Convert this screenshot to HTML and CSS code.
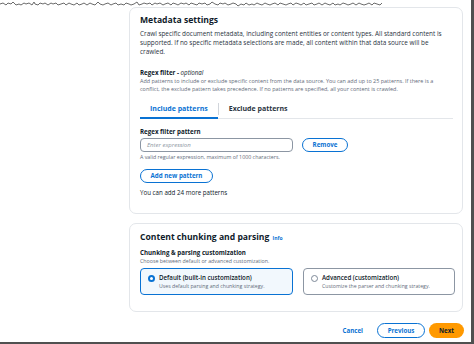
FILE: index.html
```html
<!DOCTYPE html>
<html lang="en">
<head>
<meta charset="utf-8">
<title>Metadata settings</title>
<link rel="stylesheet" href="styles.css">
</head>
<body>
<div class="frame">
  <svg class="torn" width="471" height="8" viewBox="0 0 471 8" aria-hidden="true">
    <path d="M0 4 l3 -1 l3 2 l2 -2 l3 1 l2 -2 l3 3 l3 -1 l2 1 l3 -2 l2 1 l3 -1 l3 2 l2 -3 l1 2 l3 1 l2 -2 l3 1 l2 -1 l3 2 l3 -2 l2 1 l3 -1 l2 2 l3 -1 l3 -1 l2 2 l3 -2 l2 1 l3 1 l3 -2 l2 2 l3 -1 l2 -1 l3 2 l3 -2 l2 1 l3 1 l3 -3 l2 2 l3 1 l2 -1 l3 -1 l3 2 l2 -1 l3 -1 l2 2 l3 -1 l3 1 l2 -2 l3 1 l2 1 l3 -1 l3 -2 l2 3 l3 -1 l2 -1 l3 1 l3 -1 l2 2 l3 -2 l2 1 l3 -1 l3 2 l2 -1 l3 -1 l3 2 l2 -2 l3 1 l2 1 l3 -2 l3 1 l2 -1 l3 2 l2 -2 l3 1 l3 1 l2 -2 l3 1 l3 -1 l2 2 l3 -1 l2 -2 l3 2 l3 1 l2 -2 l3 1 l2 -1 l3 2 l3 -1 l2 -1 l3 1 l2 2 l3 -2 l3 1 l2 -2 l3 2 l3 -1 l2 1 l3 -2 l2 1 l3 1 l3 -2 l2 1 l3 1 l2 -1 l3 -1 l3 2 l2 -2 l3 1 l3 1 l2 -1 l3 -1 l2 2 l3 -2 l3 1 l2 1 l3 -2 l2 2 l3 -1 l3 -1 l2 2 l3 -1 l2 -1 l3 2 l3 -2 l2 1 l3 1 l3 -2 l2 2 l3 -1 l2 1 l3 -2 l3 1 l2 1 l3 -1 l2 -1 l3 2 l3 -2 l2 1 l3 1 l3 -1 l2 -1 l3 2 l2 -2 l3 1 l3 1 l2 -2" fill="none" stroke="#6b6b6b" stroke-width="1"/>
  </svg>
  <main class="content">
    <section class="card">
      <h2 class="card-title">Metadata settings</h2>
      <p class="card-desc">Crawl specific document metadata, including content entities or content types. All standard content is supported. If no specific metadata selections are made, all content within that data source will be crawled.</p>

      <div class="field-label regex-label">Regex filter - <em>optional</em></div>
      <p class="field-desc">Add patterns to include or exclude specific content from the data source. You can add up to 25 patterns. If there is a conflict, the exclude pattern takes precedence. If no patterns are specified, all your content is crawled.</p>

      <div class="tabs">
        <div class="tab tab-active">Include patterns</div>
        <div class="tab-sep"></div>
        <div class="tab">Exclude patterns</div>
      </div>

      <div class="field-label pattern-label">Regex filter pattern</div>
      <div class="input-row">
        <div class="input">Enter expression</div>
        <button class="btn btn-normal">Remove</button>
      </div>
      <p class="hint">A valid regular expression, maximum of 1000 characters.</p>
      <button class="btn btn-normal btn-add">Add new pattern</button>
      <p class="remaining">You can add 24 more patterns</p>
    </section>

    <section class="card card-chunk">
      <h2 class="card-title">Content chunking and parsing <span class="info">Info</span></h2>
      <div class="field-label chunk-label">Chunking &amp; parsing customization</div>
      <p class="hint chunk-hint">Choose between default or advanced customization.</p>
      <div class="tiles">
        <div class="tile tile-selected">
          <span class="radio radio-on"></span>
          <div class="tile-text">
            <div class="tile-title">Default (built-in customization)</div>
            <div class="tile-sub">Uses default parsing and chunking strategy.</div>
          </div>
        </div>
        <div class="tile">
          <span class="radio"></span>
          <div class="tile-text">
            <div class="tile-title">Advanced (customization)</div>
            <div class="tile-sub">Customize the parser and chunking strategy.</div>
          </div>
        </div>
      </div>
    </section>

    <div class="actions">
      <button class="btn btn-link">Cancel</button>
      <button class="btn btn-normal btn-prev">Previous</button>
      <button class="btn btn-primary">Next</button>
    </div>
  </main>
</div>
</body>
</html>
```

FILE: styles.css
```css
* { box-sizing: border-box; }
html, body { margin: 0; padding: 0; background: #ffffff; }
body {
  font-family: "Open Sans", "Noto Sans", "Liberation Sans", sans-serif;
  color: #0f1b2a;
}
.frame {
  width: 474px;
  height: 344px;
  border-right: 3px solid #505050;
  border-bottom: 2px solid #505050;
  overflow: hidden;
  display: flex;
  flex-direction: column;
}
.torn { display: block; flex: none; }
.content {
  padding: 0 8px 0 129px;
  margin-top: -1px;
  display: flex;
  flex-direction: column;
}
.card {
  border: 1px solid #e3e6ea;
  border-radius: 7px;
  padding: 6px 9px 16px 10px;
  background: #fff;
}
.card-title {
  margin: 0;
  font-size: 8.6px;
  line-height: 13px;
  font-weight: 700;
  color: #0f1b2a;
}
.card-desc {
  margin: 2px 0 0;
  font-size: 6.4px;
  line-height: 9px;
  color: #2a3441;
}
.field-label {
  font-size: 6.2px;
  line-height: 8px;
  font-weight: 700;
  color: #0f1b2a;
}
.field-label em { font-weight: 400; }
.regex-label { margin-top: 13px; }
.field-desc {
  margin: 0;
  font-size: 5.45px;
  line-height: 8px;
  color: #5f6b7a;
}
.tabs {
  margin-top: 6px;
  display: flex;
  align-items: center;
  border-bottom: 1px solid #e3e6ea;
}
.tab {
  font-size: 7px;
  line-height: 9px;
  font-weight: 700;
  color: #2a3441;
  padding: 5px 10px 4px;
  border-bottom: 2px solid transparent;
  margin-bottom: -1px;
}
.tab-active {
  color: #0972d3;
  border-bottom-color: #0972d3;
}
.tab-sep {
  width: 1px;
  height: 12px;
  background: #d1d5db;
}
.pattern-label { margin-top: 9px; }
.input-row {
  margin-top: 2px;
  display: flex;
  align-items: center;
  gap: 9px;
}
.input {
  width: 153px;
  height: 14px;
  border: 1px solid #8c96a3;
  border-radius: 4px;
  padding: 0 6px;
  font-size: 6px;
  line-height: 12px;
  font-style: italic;
  color: #8a94a0;
}
.btn {
  font-family: inherit;
  font-weight: 700;
  font-size: 6.2px;
  line-height: 10px;
  height: 14px;
  border-radius: 8px;
  padding: 0 9px;
  margin: 0;
  cursor: pointer;
}
.btn-normal {
  background: #fff;
  border: 1.5px solid #0972d3;
  color: #0972d3;
}
.input-row .btn { width: 46px; padding: 0; }
.hint {
  margin: 2px 0 0;
  font-size: 5.3px;
  line-height: 7px;
  color: #5f6b7a;
}
.btn-add {
  margin-top: 5px;
  align-self: flex-start;
  width: 73px;
  padding: 0;
}
.remaining {
  margin: 6px 0 0;
  font-size: 6.2px;
  line-height: 8px;
  color: #0f1b2a;
}
.card-chunk { margin-top: 9px; padding-top: 7px; }
.info {
  font-size: 5px;
  font-weight: 700;
  color: #0972d3;
  margin-left: 1px;
}
.chunk-label { margin-top: 4px; }
.chunk-hint { margin-top: 1px; }
.tiles {
  margin-top: 3px;
  display: grid;
  grid-template-columns: 153px 152px;
  gap: 10px;
}
.tile {
  height: 27px;
  border: 1px solid #8c96a3;
  border-radius: 4px;
  display: flex;
  align-items: flex-start;
  gap: 4px;
  padding: 5px 6px;
}
.tile-selected {
  border-color: #0972d3;
  background: #f2f8fd;
}
.radio {
  flex: none;
  width: 7px;
  height: 7px;
  border-radius: 50%;
  border: 1px solid #7d8998;
  background: #fff;
  margin-top: 1px;
  margin-left: 1px;
}
.radio-on {
  border: 2px solid #0972d3;
}
.tile-title {
  font-size: 6.2px;
  line-height: 8px;
  font-weight: 600;
  color: #0f1b2a;
}
.tile-sub {
  margin-top: 1px;
  font-size: 5.2px;
  line-height: 7px;
  color: #5f6b7a;
}
.actions {
  margin-top: 11px;
  display: flex;
  justify-content: flex-end;
  align-items: center;
  gap: 4px;
  margin-right: -1px;
}
.btn-link {
  background: transparent;
  border: none;
  color: #0972d3;
  padding: 0 10px 0 0;
}
.btn-prev { width: 48px; padding: 0; height: 15px; }
.btn-primary {
  background: #ff9900;
  border: none;
  color: #0f1b2a;
  width: 35px;
  height: 15px;
  padding: 0;
}
```
